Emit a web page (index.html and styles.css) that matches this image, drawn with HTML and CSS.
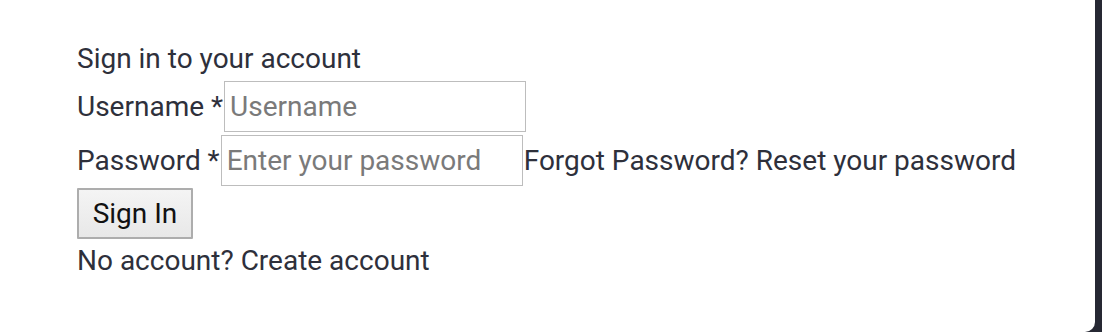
FILE: index.html
```html
<!DOCTYPE html>
<html lang="en">
<head>
<meta charset="utf-8">
<title>Sign in</title>
<link rel="stylesheet" href="styles.css">
</head>
<body>
<div class="card">
  <form class="signin">
    <div class="title">Sign in to your account</div>
    <div class="row">
      <label class="label" for="u">Username *</label><input id="u" class="field" type="text" placeholder="Username">
    </div>
    <div class="row row-pass">
      <label class="label" for="p">Password *</label><input id="p" class="field" type="password" placeholder="Enter your password"><span class="forgot">Forgot Password? Reset your password</span>
    </div>
    <div class="actions"><button class="btn" type="button">Sign In</button></div>
    <div class="foot">No account? Create account</div>
  </form>
</div>
</body>
</html>
```
FILE: styles.css
```css
html, body {
  margin: 0;
  padding: 0;
  background: #262833;
  height: 100%;
}
.card {
  width: 1095px;
  height: 332px;
  background: #ffffff;
  border-radius: 0 0 10px 0;
  box-sizing: border-box;
  padding: 42px 0 0 77px;
  font-family: Roboto, "Liberation Sans", sans-serif;
  font-size: 28px;
  color: #2e303b;
}
.signin {
  display: flex;
  flex-direction: column;
  align-items: flex-start;
}
.title {
  line-height: 33px;
  margin-bottom: 6px;
}
.row {
  display: flex;
  align-items: baseline;
  margin-bottom: 3px;
}
.row-pass {
  margin-bottom: 2px;
}
.label {
  line-height: 33px;
}
.field {
  box-sizing: border-box;
  width: 302px;
  height: 51px;
  margin: 0 0 0 1px;
  padding: 0 5px;
  border: 1.5px solid #bdbdbd;
  font-family: Roboto, "Liberation Sans", sans-serif;
  font-size: 28px;
  color: #2e303b;
  background: #fff;
  outline: none;
}
.field::placeholder {
  color: #7a7a7a;
}
.forgot {
  margin-left: 1px;
  line-height: 33px;
}
.btn {
  box-sizing: border-box;
  width: 116px;
  height: 51px;
  padding: 0;
  border: 2px solid #adadad;
  border-radius: 1px;
  background: linear-gradient(#f4f4f4, #e8e8e8);
  font-family: Roboto, "Liberation Sans", sans-serif;
  font-size: 28px;
  color: #111;
}
.foot {
  line-height: 33px;
  margin-top: 5px;
}
```
